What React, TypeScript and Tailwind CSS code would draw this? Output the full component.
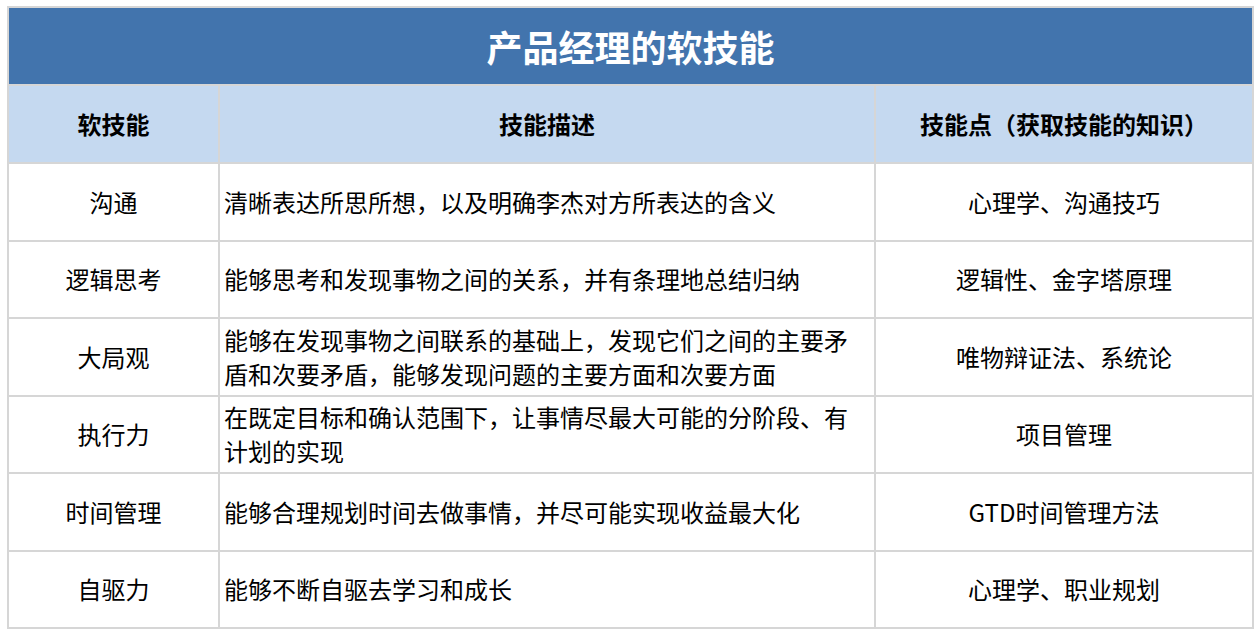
import React from "react";

const rows: [string, string, string][] = [
  ["沟通", "清晰表达所思所想，以及明确李杰对方所表达的含义", "心理学、沟通技巧"],
  ["逻辑思考", "能够思考和发现事物之间的关系，并有条理地总结归纳", "逻辑性、金字塔原理"],
  ["大局观", "能够在发现事物之间联系的基础上，发现它们之间的主要矛盾和次要矛盾，能够发现问题的主要方面和次要方面", "唯物辩证法、系统论"],
  ["执行力", "在既定目标和确认范围下，让事情尽最大可能的分阶段、有计划的实现", "项目管理"],
  ["时间管理", "能够合理规划时间去做事情，并尽可能实现收益最大化", "GTD时间管理方法"],
  ["自驱力", "能够不断自驱去学习和成长", "心理学、职业规划"],
];

export default function App() {
  return (
    <div
      className="bg-white w-[1258px] h-[632px] overflow-hidden pt-[6px] pl-[7px]"
      style={{ fontFamily: '"Noto Sans CJK SC", "Noto Sans", sans-serif' }}
    >
      <div className="grid w-[1247px] grid-cols-[209px_654px_376px] grid-rows-[76px_76px_repeat(6,75.5px)] gap-[2px] p-[2px] bg-[#d6d6d6]">
        <div className="col-span-3 bg-[#4274ad] flex items-center justify-center text-white font-bold text-[36px] leading-none">
          产品经理的软技能
        </div>
        <div className="bg-[#c5d9f0] flex items-center justify-center font-bold text-[24px] text-black">软技能</div>
        <div className="bg-[#c5d9f0] flex items-center justify-center font-bold text-[24px] text-black">技能描述</div>
        <div className="bg-[#c5d9f0] flex items-center justify-center font-bold text-[24px] text-black">技能点（获取技能的知识）</div>
        {rows.map((r, i) => (
          <React.Fragment key={i}>
            <div className="bg-white flex items-center justify-center text-[24px] text-black">{r[0]}</div>
            <div className="bg-white flex items-center pl-[4px] pr-[14px] text-[24px] leading-[34px] text-black">
              <span>{r[1]}</span>
            </div>
            <div className="bg-white flex items-center justify-center text-[24px] text-black">{r[2]}</div>
          </React.Fragment>
        ))}
      </div>
    </div>
  );
}
